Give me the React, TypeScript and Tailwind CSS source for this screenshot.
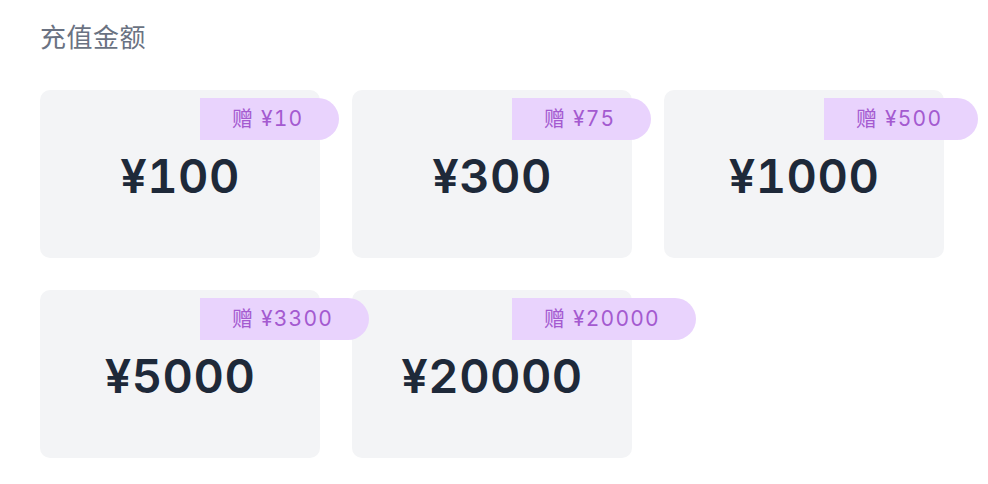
const amounts = [
  { value: 100, bonus: 10 },
  { value: 300, bonus: 75 },
  { value: 1000, bonus: 500 },
  { value: 5000, bonus: 3300 },
  { value: 20000, bonus: 20000 },
];

const App = () => {
  return (
    <div
      className="min-h-screen bg-white px-10 pt-[22px]"
      style={{ fontFamily: 'Inter, "Noto Sans CJK SC", sans-serif' }}
    >
      <h2 className="text-[26px] leading-8 tracking-[0.5px] text-gray-500 mb-9">充值金额</h2>
      <div className="grid grid-cols-[repeat(3,280px)] gap-8">
        {amounts.map(a => (
          <div
            key={a.value}
            className="relative h-[168px] rounded-[10px] bg-gray-100 flex items-center justify-center"
          >
            <div className="absolute z-10 top-2 left-40 h-[42px] pl-8 pr-[36px] flex items-center whitespace-nowrap rounded-r-full bg-[#e9d3fd] text-[21px] tracking-[1.2px] tabular-nums text-[#a45ad0]">
              赠 ¥{a.bonus}
            </div>
            <span className="text-[47px] font-semibold tracking-[0.5px] tabular-nums text-gray-800 pt-1">
              ¥{a.value}
            </span>
          </div>
        ))}
      </div>
    </div>
  );
};

export default App;
